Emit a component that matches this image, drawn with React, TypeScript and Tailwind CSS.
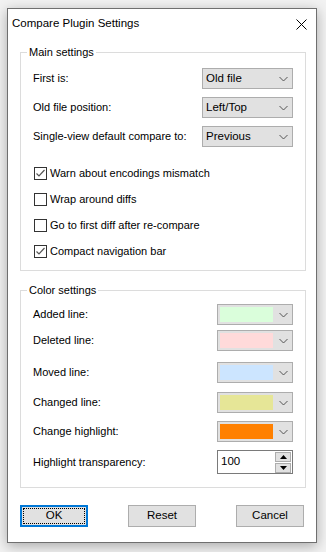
import React from 'react'

const font = { fontFamily: '"Liberation Sans", Arial, sans-serif' }

function Chevron() {
  return (
    <svg width="9" height="6" viewBox="0 0 9 6" className="shrink-0">
      <path d="M0.5 1 L4.5 5 L8.5 1" fill="none" stroke="#555" strokeWidth="1" />
    </svg>
  )
}

function Combo({ text, width }: { text: string; width: string }) {
  return (
    <div className={`${width} h-[21px] flex items-center justify-between bg-[#e1e1e1] border border-[#adadad] pl-[3px] pr-[4px]`}>
      <span className="text-[11.5px]">{text}</span>
      <Chevron />
    </div>
  )
}

function ColorCombo({ color }: { color: string }) {
  return (
    <div className="w-[76px] h-[21px] flex items-center bg-[#e1e1e1] border border-[#adadad] pl-[2px] pr-[4px] gap-[6px]">
      <div className="w-[53px] h-[15px]" style={{ backgroundColor: color }} />
      <Chevron />
    </div>
  )
}

function Checkbox({ label, checked }: { label: string; checked?: boolean }) {
  return (
    <div className="flex items-center h-[13px]">
      <div className="w-[13px] h-[13px] border border-[#333] bg-white flex items-center justify-center shrink-0">
        {checked && (
          <svg width="11" height="11" viewBox="0 0 11 11">
            <path d="M1.5 5.5 L4 8 L9.5 2" fill="none" stroke="#555" strokeWidth="1.2" />
          </svg>
        )}
      </div>
      <span className="ml-[3px]">{label}</span>
    </div>
  )
}

function Group({ title, className, children }: { title: string; className: string; children: React.ReactNode }) {
  return (
    <div className={`relative w-[286px] border border-[#dcdcdc] ${className}`}>
      <span className="absolute left-[6px] -top-[9px] bg-white px-[2px] leading-[16px]">{title}</span>
      {children}
    </div>
  )
}

function Button({ text, focused }: { text: string; focused?: boolean }) {
  return focused ? (
    <div className="w-[68px] h-[22px] border-2 border-[#0078d7] bg-[#e1e1e1] p-[1px]">
      <div className="w-full h-full border border-dotted border-black flex items-center justify-center">{text}</div>
    </div>
  ) : (
    <div className="w-[68px] h-[22px] border border-[#adadad] bg-[#e1e1e1] flex items-center justify-center">{text}</div>
  )
}

function Row({ label, children, className }: { label: string; children: React.ReactNode; className?: string }) {
  return (
    <div className={`flex items-center justify-between ${className ?? ''}`}>
      <span>{label}</span>
      {children}
    </div>
  )
}

export default function App() {
  return (
    <div className="w-[326px] h-[552px] bg-[#f2f2f2] pt-[8px] pl-[7px] text-[11px] text-black" style={font}>
      <div className="w-[310px] h-[535px] bg-white border border-[#6f6f6f] shadow-[0_3px_12px_rgba(0,0,0,0.3)] flex flex-col">
        {/* Title bar */}
        <div className="h-[30px] flex items-center justify-between pl-[4px] pr-[9px] shrink-0">
          <span className="text-[11.5px]">Compare Plugin Settings</span>
          <svg width="11" height="11" viewBox="0 0 11 11">
            <path d="M0.5 0.5 L10.5 10.5 M10.5 0.5 L0.5 10.5" stroke="#000" strokeWidth="1" />
          </svg>
        </div>

        <div className="pl-[12px] flex flex-col">
          {/* Main settings */}
          <Group title="Main settings" className="mt-[13px] h-[219px]">
            <div className="pl-[12px] pr-[12px] pt-[15px] flex flex-col">
              <Row label="First is:">
                <Combo text="Old file" width="w-[91px]" />
              </Row>
              <Row label="Old file position:" className="mt-[8px]">
                <Combo text="Left/Top" width="w-[91px]" />
              </Row>
              <Row label="Single-view default compare to:" className="mt-[8px]">
                <Combo text="Previous" width="w-[91px]" />
              </Row>
              <div className="flex flex-col gap-[13px] mt-[20px] pl-[1px]">
                <Checkbox label="Warn about encodings mismatch" checked />
                <Checkbox label="Wrap around diffs" />
                <Checkbox label="Go to first diff after re-compare" />
                <Checkbox label="Compact navigation bar" checked />
              </div>
            </div>
          </Group>

          {/* Color settings */}
          <Group title="Color settings" className="mt-[19px] h-[198px]">
            <div className="pl-[12px] pr-[12px] pt-[13px] flex flex-col">
              <Row label="Added line:">
                <ColorCombo color="#dafedb" />
              </Row>
              <Row label="Deleted line:" className="mt-[5px]">
                <ColorCombo color="#ffdada" />
              </Row>
              <Row label="Moved line:" className="mt-[11px]">
                <ColorCombo color="#cce5ff" />
              </Row>
              <Row label="Changed line:" className="mt-[9px]">
                <ColorCombo color="#e6e697" />
              </Row>
              <Row label="Change highlight:" className="mt-[8px]">
                <ColorCombo color="#ff8000" />
              </Row>
              <Row label="Highlight transparency:" className="mt-[8px]">
                <div className="w-[76px] h-[24px] border border-[#7a7a7a] bg-white flex items-center justify-between pl-[3px] pr-[1px]">
                  <span className="text-[11.5px]">100</span>
                  <div className="flex flex-col gap-[1px]">
                    <div className="w-[16px] h-[10px] bg-[#e1e1e1] border border-[#adadad] flex items-center justify-center">
                      <svg width="7" height="4" viewBox="0 0 7 4"><path d="M0 4 L3.5 0 L7 4 Z" fill="#000" /></svg>
                    </div>
                    <div className="w-[16px] h-[10px] bg-[#e1e1e1] border border-[#adadad] flex items-center justify-center">
                      <svg width="7" height="4" viewBox="0 0 7 4"><path d="M0 0 L3.5 4 L7 0 Z" fill="#000" /></svg>
                    </div>
                  </div>
                </div>
              </Row>
            </div>
          </Group>

          {/* Buttons */}
          <div className="mt-[17px] w-[284px] flex justify-between text-[11.5px]">
            <Button text="OK" focused />
            <Button text="Reset" />
            <Button text="Cancel" />
          </div>
        </div>
      </div>
    </div>
  )
}
